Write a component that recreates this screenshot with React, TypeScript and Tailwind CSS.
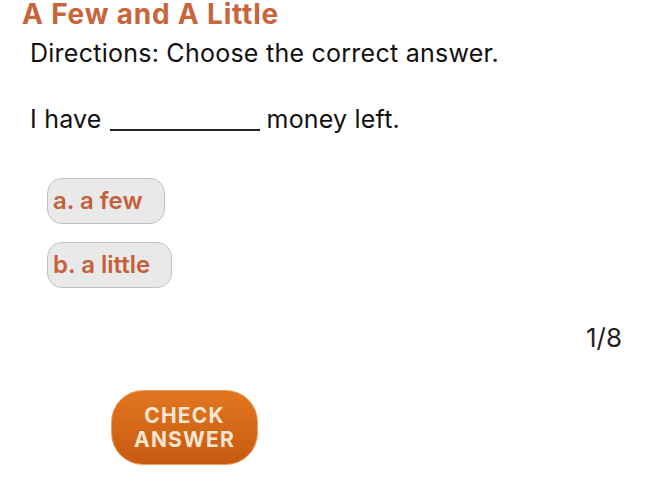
export default function App() {
  return (
    <div
      className="w-[648px] h-[486px] bg-white overflow-hidden"
      style={{ fontFamily: 'Inter, "Liberation Sans", Arial, sans-serif' }}
    >
      <h1 className="pl-[22px] text-[28px] leading-[28px] font-bold text-[#c8653a] tracking-[0.8px]">
        A Few and A Little
      </h1>
      <p className="pl-[30px] mt-[11px] text-[25px] leading-[28px] text-[#111] tracking-[0.25px]">
        Directions: Choose the correct answer.
      </p>
      <p className="pl-[30px] mt-[38px] text-[25px] leading-[28px] text-[#111] flex items-end tracking-[0.2px]">
        <span>I have</span>
        <span className="inline-block w-[150px] h-[2px] bg-[#222] ml-[8px] mr-[7px] mb-[2px]" />
        <span>money left.</span>
      </p>
      <div className="pl-[47px] mt-[45px] flex flex-col items-start gap-[18px]">
        {["a. a few", "b. a little"].map((t) => (
          <button
            key={t}
            className="h-[46px] pl-[5px] pr-[21px] pb-[1px] rounded-[15px] bg-[#e9e9e9] border border-[#c2c2c2] text-[24px] leading-[28px] font-semibold text-[#c5603c]"
          >
            {t}
          </button>
        ))}
      </div>
      <div className="pr-[26px] mt-[36px] text-right text-[26px] leading-[28px] text-[#222]">
        1/8
      </div>
      <div className="pl-[111px] mt-[38px]">
        <button className="w-[147px] h-[75px] rounded-[32px] border border-[#f0a060] bg-gradient-to-b from-[#e2761f] to-[#c75a10] text-[#fbe6d4] text-[21px] leading-[24px] font-bold tracking-[1.2px]">
          CHECK
          <br />
          ANSWER
        </button>
      </div>
    </div>
  );
}
